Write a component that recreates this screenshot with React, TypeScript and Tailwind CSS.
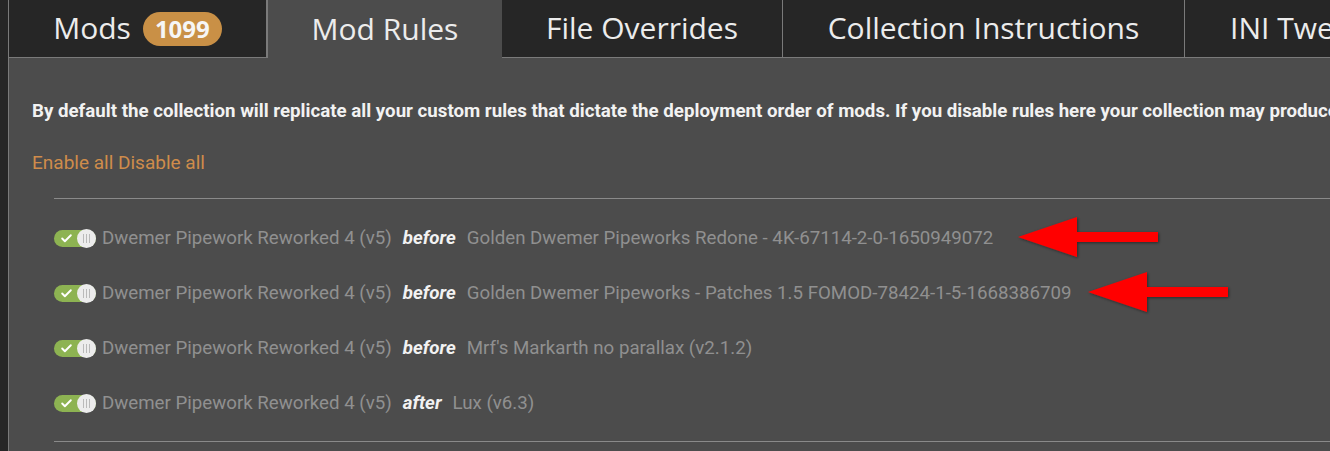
import { Check } from "lucide-react";

const tabs = [
  { label: "Mods", w: "w-[258px]", badge: "1099" },
  { label: "Mod Rules", w: "w-[235px]", active: true },
  { label: "File Overrides", w: "w-[281px]" },
  { label: "Collection Instructions", w: "w-[402px]" },
  { label: "INI Tweaks", w: "w-[260px]" },
];

const rules = [
  { rel: "before", target: "Golden Dwemer Pipeworks Redone - 4K-67114-2-0-1650949072" },
  { rel: "before", target: "Golden Dwemer Pipeworks - Patches 1.5 FOMOD-78424-1-5-1668386709" },
  { rel: "before", target: "Mrf's Markarth no parallax (v2.1.2)" },
  { rel: "after", target: "Lux (v6.3)" },
];

function Toggle() {
  return (
    <div className="relative w-[42px] h-[17px] rounded-full bg-[#8db352] shrink-0">
      <Check className="absolute left-[6px] top-[2px] w-[13px] h-[13px] text-white" strokeWidth={3.5} />
      <div className="absolute right-0 top-[-1px] w-[19px] h-[19px] rounded-full bg-[#ececec] flex items-center justify-center gap-[2px]">
        <span className="w-px h-[9px] bg-[#b9b9b9]" />
        <span className="w-px h-[9px] bg-[#b9b9b9]" />
        <span className="w-px h-[9px] bg-[#b9b9b9]" />
      </div>
    </div>
  );
}

// red annotation arrow, tip on the left
function Arrow({ className }: { className: string }) {
  return (
    <svg className={className} width="150" height="50" viewBox="0 0 150 50">
      <defs>
        <filter id="sh" x="-20%" y="-30%" width="140%" height="160%">
          <feDropShadow dx="1" dy="1" stdDeviation="1.5" floodColor="#000" floodOpacity="0.45" />
        </filter>
      </defs>
      <polygon
        points="5,25 64,5 64,20 145,20 145,30 64,30 64,45"
        fill="#ff0000"
        filter="url(#sh)"
      />
    </svg>
  );
}

export default function App() {
  return (
    <div className="relative w-[1330px] h-[451px] overflow-hidden bg-[#262626] flex" style={{ fontFamily: "Roboto, sans-serif" }}>
      <div className="w-[9px] shrink-0 border-r border-[#7a7a7a]" />
      <div className="flex-1 flex flex-col min-w-0">
        {/* tab strip */}
        <div className="flex h-[58px] shrink-0 overflow-hidden">
          {tabs.map((t) => (
            <div
              key={t.label}
              className={`${t.w} shrink-0 flex items-center justify-center gap-[12px] text-[30px] text-[#ececec] ${
                t.active ? "bg-[#4c4c4c] border-l border-[#7a7a7a]" : "bg-[#262626] border-b border-r border-[#7a7a7a]"
              } ${t.label === "INI Tweaks" ? "justify-start pl-[45px]" : ""}`}
              style={{ fontFamily: "'Open Sans', sans-serif" }}
            >
              <span className="whitespace-nowrap pb-[2px]">{t.label}</span>
              {t.badge && (
                <span className="h-[34px] px-[12px] rounded-full bg-[#c99046] text-[#f6f6f6] text-[24px] font-bold flex items-center">
                  {t.badge}
                </span>
              )}
            </div>
          ))}
        </div>

        {/* content */}
        <div className="flex-1 bg-[#4c4c4c] pl-[23px] pt-[40px]">
          <p className="text-[18.7px] font-bold text-[#f2f2f2] whitespace-nowrap leading-[26px]">
            By default the collection will replicate all your custom rules that dictate the deployment order of mods. If you disable rules here your collection may produce unexpected results.
          </p>
          <div className="mt-[26px] text-[19px] text-[#cf8c4b] leading-[26px]">
            <span>Enable all</span> <span>Disable all</span>
          </div>
          <div className="ml-[22px] mt-[22px] border-t border-[#8a8a8a]">
            <div className="flex flex-col pt-[12px] pb-[10px]">
              {rules.map((r, i) => (
                <div key={i} className="h-[55px] flex items-center gap-[6px] text-[18.7px] text-[#909090] whitespace-nowrap">
                  <Toggle />
                  <span>Dwemer Pipework Reworked 4 (v5)</span>
                  <span className="mx-[5px] font-bold italic text-[#f2f2f2]">{r.rel}</span>
                  <span>{r.target}</span>
                </div>
              ))}
            </div>
          </div>
          <div className="ml-[22px] border-t border-[#8a8a8a]" />
        </div>
      </div>

      <Arrow className="absolute left-[1013px] top-[212px]" />
      <Arrow className="absolute left-[1083px] top-[267px]" />
    </div>
  );
}
